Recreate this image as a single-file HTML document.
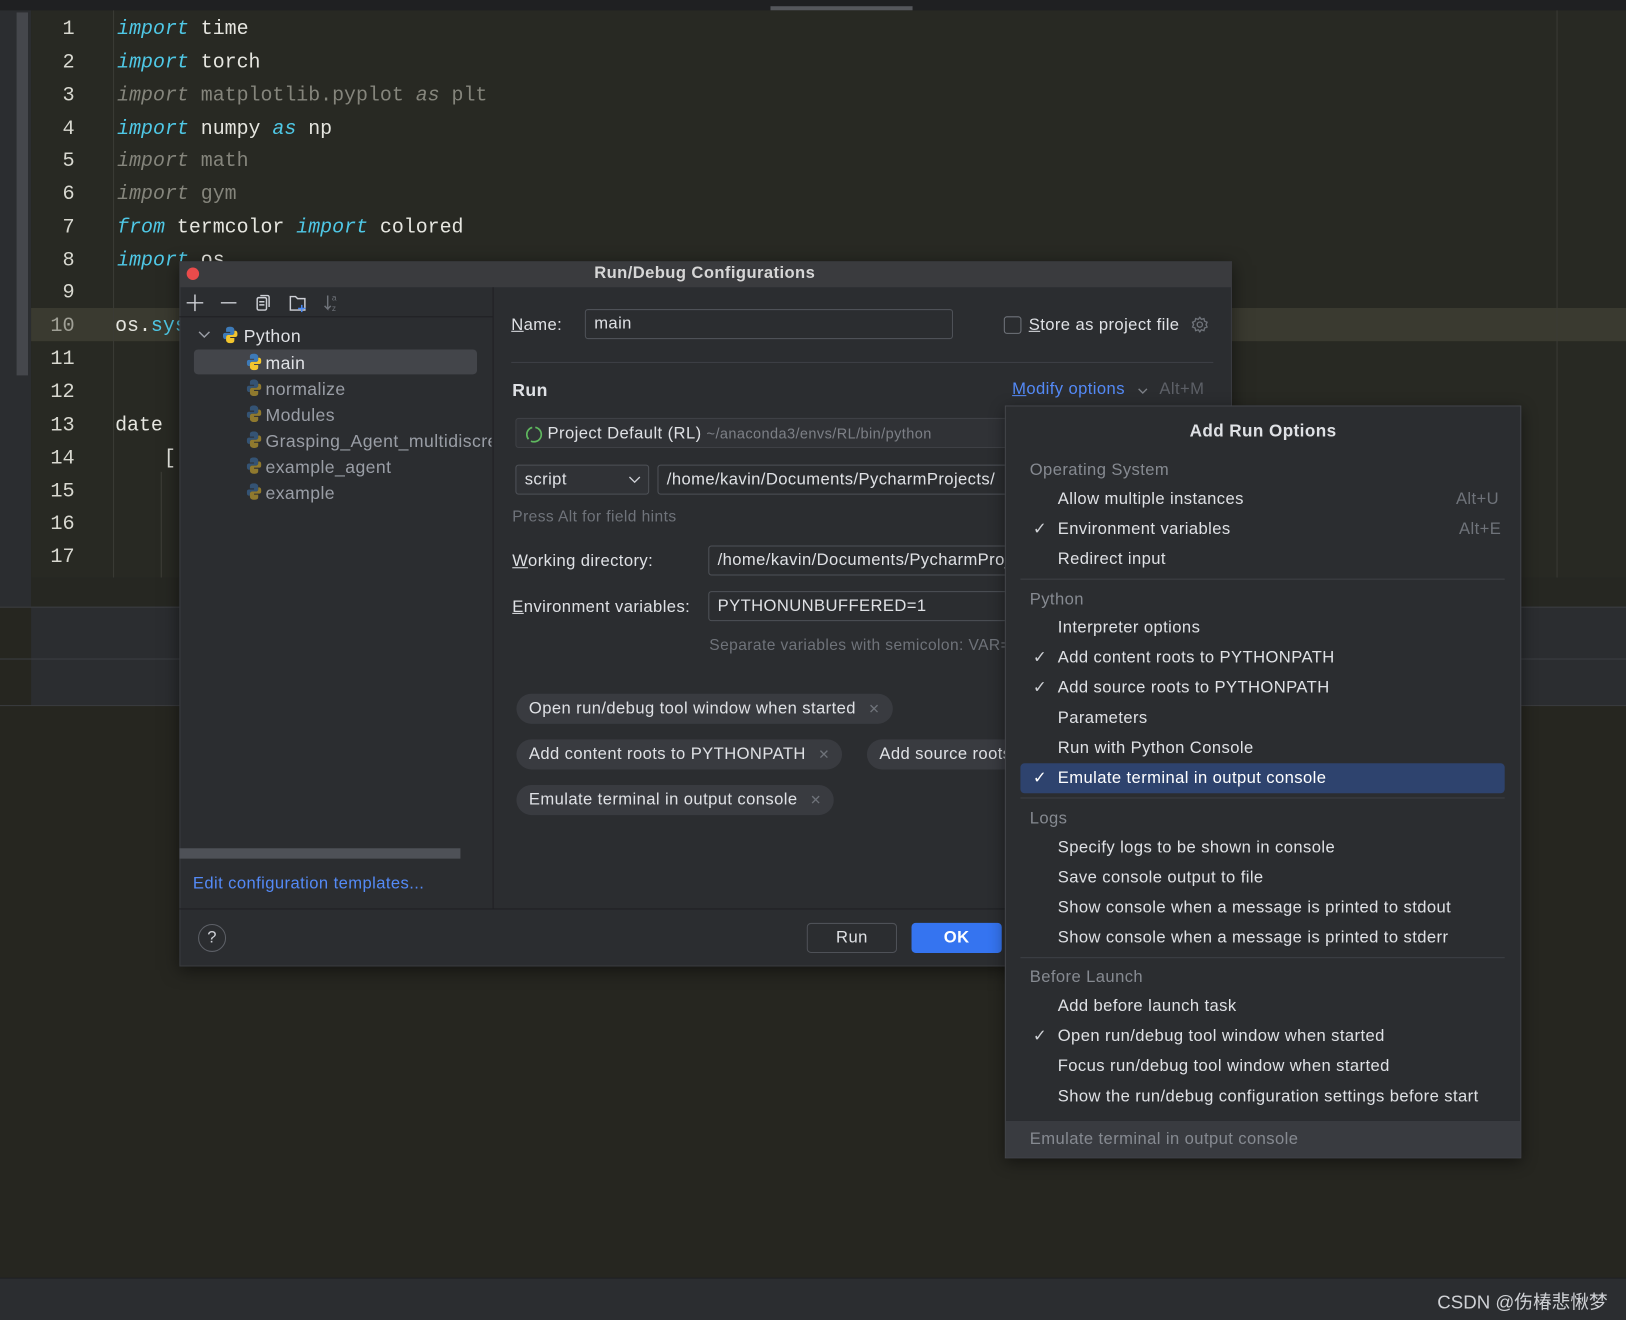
<!DOCTYPE html>
<html><head><meta charset="utf-8"><style>
*{margin:0;padding:0;box-sizing:border-box}
html,body{width:1626px;height:1320px;overflow:hidden;background:#262620}
#w{position:absolute;left:0;top:0;width:1568px;height:1273px;transform:scale(1.0370);transform-origin:0 0;font-family:"Liberation Sans",sans-serif;color:#dfe1e5;font-size:16px;letter-spacing:0.4px}
.a{position:absolute;white-space:nowrap}
.code{font-family:"Liberation Mono",monospace;font-size:19.2px;color:#e6e6e0;letter-spacing:0}
.kw{color:#4fc8e6;font-style:italic}
.dim{color:#85857c}
.ln{font-family:"Liberation Mono",monospace;font-size:19.5px;color:#d8d8d0;width:40px;text-align:right;letter-spacing:0}
.t{line-height:20px}
.it{position:absolute;left:1020px}
.hd{position:absolute;left:993px;color:#868a91}
.ck{position:absolute;left:996px;color:#cfd1d5}
.sep{position:absolute;left:984px;width:467px;height:1px;background:#3e4045}
.chip{position:absolute;height:29px;border-radius:15px;background:#393b40;padding:0 12px;line-height:29px;white-space:nowrap;color:#dfe1e5}
.chip span{color:#6f737a;margin-left:12px;font-size:13px}
.fld{position:absolute;height:29px;border:1px solid #4e5157;border-radius:3px;background:#2b2d30;line-height:27px;padding-left:8px;white-space:nowrap;overflow:hidden}
.tr{position:absolute;left:256px;color:#9a9ea6}
.py{position:absolute;width:14px;height:16px}
</style></head><body><div id="w">
<div class="a" style="left:0;top:0;width:1568px;height:10px;background:#1f2022"></div>
<div class="a" style="left:743px;top:6px;width:137px;height:4px;background:#55575c"></div>
<div class="a" style="left:0;top:10px;width:30px;height:575px;background:#2b2d30"></div>
<div class="a" style="left:16px;top:12px;width:11px;height:350px;background:#45474c"></div>
<div class="a" style="left:30px;top:10px;width:1538px;height:547px;background:#282923"></div>
<div class="a" style="left:30px;top:297px;width:1538px;height:32px;background:#3a3a30"></div>
<div class="a" style="left:109px;top:10px;width:1px;height:547px;background:#3a3b35"></div>
<div class="a" style="left:155px;top:455px;width:1px;height:102px;background:#3e3f38"></div>
<div class="a" style="left:1501px;top:10px;width:1px;height:547px;background:#3a3b35"></div>
<div class="a" style="left:30px;top:557px;width:1538px;height:123px;background:#2b2d30"></div>
<div class="a" style="left:30px;top:557px;width:1538px;height:28px;background:#262722"></div>
<div class="a" style="left:0;top:585px;width:1568px;height:1px;background:#3c3e42"></div>
<div class="a" style="left:0;top:635px;width:1568px;height:1px;background:#3c3e42"></div>
<div class="a" style="left:0;top:680px;width:1568px;height:1px;background:#3c3e42"></div>
<div class="a" style="left:0;top:681px;width:1568px;height:551px;background:#262620"></div>
<div class="a" style="left:0;top:1232px;width:1568px;height:41px;background:#2b2d30;border-top:1px solid #1e1f22"></div>
<div class="a" style="left:1386px;top:1242px;font-size:18px;color:#cfd1d5;letter-spacing:0;font-family:'Liberation Sans','Noto Sans CJK SC',sans-serif">CSDN @伤椿悲愀梦</div>

<div class="a ln" style="left:32px;top:17px">1</div>
<div class="a ln" style="left:32px;top:49px">2</div>
<div class="a ln" style="left:32px;top:81px">3</div>
<div class="a ln" style="left:32px;top:113px">4</div>
<div class="a ln" style="left:32px;top:144px">5</div>
<div class="a ln" style="left:32px;top:176px">6</div>
<div class="a ln" style="left:32px;top:208px">7</div>
<div class="a ln" style="left:32px;top:240px">8</div>
<div class="a ln" style="left:32px;top:271px">9</div>
<div class="a ln" style="left:32px;top:303px;color:#a0a096">10</div>
<div class="a ln" style="left:32px;top:335px">11</div>
<div class="a ln" style="left:32px;top:367px">12</div>
<div class="a ln" style="left:32px;top:399px">13</div>
<div class="a ln" style="left:32px;top:431px">14</div>
<div class="a ln" style="left:32px;top:463px">15</div>
<div class="a ln" style="left:32px;top:494px">16</div>
<div class="a ln" style="left:32px;top:526px">17</div>
<div class="a code" style="left:113px;top:17px"><span class="kw">import</span> time</div>
<div class="a code" style="left:113px;top:49px"><span class="kw">import</span> torch</div>
<div class="a code dim" style="left:113px;top:81px"><i>import</i> matplotlib.pyplot <i>as</i> plt</div>
<div class="a code" style="left:113px;top:113px"><span class="kw">import</span> numpy <span class="kw">as</span> np</div>
<div class="a code dim" style="left:113px;top:144px"><i>import</i> math</div>
<div class="a code dim" style="left:113px;top:176px"><i>import</i> gym</div>
<div class="a code" style="left:113px;top:208px"><span class="kw">from</span> termcolor <span class="kw">import</span> colored</div>
<div class="a code" style="left:113px;top:240px"><span class="kw">import</span> os</div>
<div class="a code" style="left:111px;top:303px">os.<span style="color:#4fc8e6">sys</span></div>
<div class="a code" style="left:111px;top:399px">date</div>
<div class="a code" style="left:158px;top:431px">[</div>

<div class="a" style="left:173px;top:252px;width:1015px;height:680px;background:#2b2d30;box-shadow:0 4px 16px rgba(0,0,0,.5);border:1px solid #3a3c40"></div>
<div class="a" style="left:173px;top:252px;width:1015px;height:25px;background:#3a3b3e"></div>
<div class="a" style="left:180px;top:258px;width:12px;height:12px;border-radius:6px;background:#e94b4b"></div>
<div class="a" style="left:573px;top:255px;font-weight:bold;font-size:16px;color:#d6d6d6">Run/Debug Configurations</div>
<div class="a" style="left:475px;top:277px;width:1px;height:599px;background:#1f2023"></div>
<div class="a" style="left:173px;top:305px;width:302px;height:1px;background:#1f2023"></div>
<svg class="a" style="left:178px;top:281px" width="160" height="22" fill="none" stroke="#ced0d6" stroke-width="1.4">
<path d="M10 3v16M2 11h16"/><path d="M35 11h15"/>
<rect x="70" y="6" width="9" height="12" rx="1.5"/><path d="M73 4h7a1.5 1.5 0 0 1 1.5 1.5V15M72 10h5M72 13h5"/>
<path d="M102 5h5l2 2h7v11h-14z"/><path d="M113 13v7M109.5 16.5h7" stroke="#4a8af7"/>
<path d="M138 4v13l-3-3M138 17l3-3" stroke="#6f737a"/><text x="142" y="9" font-size="8" fill="#6f737a" stroke="none">a</text><text x="142" y="19" font-size="8" fill="#6f737a" stroke="none">z</text>
</svg>
<svg class="a" style="left:190px;top:317px" width="14" height="12"><path d="M2 3l5 5 5-5" fill="none" stroke="#9a9ea6" stroke-width="1.4"/></svg>
<svg class="py" style="left:215px;top:315px" viewBox="0 0 14 16"><path d="M7 0C3 0 3 2 3 3v2h4v1H2C0 6 0 8 0 9c0 2 1 3 2 3h1v-2c0-1 1-2 2-2h4c1 0 2-1 2-2V3c0-1-1-3-4-3z" fill="#3d7ab8"/><path d="M7 16c4 0 4-2 4-3v-2H7v-1h5c2 0 2-2 2-3 0-2-1-3-2-3h-1v2c0 1-1 2-2 2H5c-1 0-2 1-2 2v3c0 1 1 3 4 3z" fill="#f2c52e"/></svg>
<div class="a" style="left:235px;top:315px;font-size:17px;color:#dfe1e5">Python</div>
<div class="a" style="left:187px;top:337px;width:273px;height:24px;border-radius:4px;background:#43454a"></div>
<svg class="py" style="left:238px;top:341px" viewBox="0 0 14 16"><path d="M7 0C3 0 3 2 3 3v2h4v1H2C0 6 0 8 0 9c0 2 1 3 2 3h1v-2c0-1 1-2 2-2h4c1 0 2-1 2-2V3c0-1-1-3-4-3z" fill="#3d7ab8"/><path d="M7 16c4 0 4-2 4-3v-2H7v-1h5c2 0 2-2 2-3 0-2-1-3-2-3h-1v2c0 1-1 2-2 2H5c-1 0-2 1-2 2v3c0 1 1 3 4 3z" fill="#f2c52e"/></svg>
<div class="tr" style="top:341px;color:#dfe1e5;font-size:17px">main</div>
<svg class="py" style="left:238px;top:366px;opacity:.5" viewBox="0 0 14 16"><path d="M7 0C3 0 3 2 3 3v2h4v1H2C0 6 0 8 0 9c0 2 1 3 2 3h1v-2c0-1 1-2 2-2h4c1 0 2-1 2-2V3c0-1-1-3-4-3z" fill="#3d7ab8"/><path d="M7 16c4 0 4-2 4-3v-2H7v-1h5c2 0 2-2 2-3 0-2-1-3-2-3h-1v2c0 1-1 2-2 2H5c-1 0-2 1-2 2v3c0 1 1 3 4 3z" fill="#f2c52e"/></svg>
<div class="tr" style="top:366px;font-size:17px">normalize</div>
<svg class="py" style="left:238px;top:391px;opacity:.5" viewBox="0 0 14 16"><path d="M7 0C3 0 3 2 3 3v2h4v1H2C0 6 0 8 0 9c0 2 1 3 2 3h1v-2c0-1 1-2 2-2h4c1 0 2-1 2-2V3c0-1-1-3-4-3z" fill="#3d7ab8"/><path d="M7 16c4 0 4-2 4-3v-2H7v-1h5c2 0 2-2 2-3 0-2-1-3-2-3h-1v2c0 1-1 2-2 2H5c-1 0-2 1-2 2v3c0 1 1 3 4 3z" fill="#f2c52e"/></svg>
<div class="tr" style="top:391px;font-size:17px">Modules</div>
<svg class="py" style="left:238px;top:416px;opacity:.5" viewBox="0 0 14 16"><path d="M7 0C3 0 3 2 3 3v2h4v1H2C0 6 0 8 0 9c0 2 1 3 2 3h1v-2c0-1 1-2 2-2h4c1 0 2-1 2-2V3c0-1-1-3-4-3z" fill="#3d7ab8"/><path d="M7 16c4 0 4-2 4-3v-2H7v-1h5c2 0 2-2 2-3 0-2-1-3-2-3h-1v2c0 1-1 2-2 2H5c-1 0-2 1-2 2v3c0 1 1 3 4 3z" fill="#f2c52e"/></svg>
<div class="tr" style="top:416px;font-size:17px;width:218px;overflow:hidden">Grasping_Agent_multidiscrete</div>
<svg class="py" style="left:238px;top:441px;opacity:.5" viewBox="0 0 14 16"><path d="M7 0C3 0 3 2 3 3v2h4v1H2C0 6 0 8 0 9c0 2 1 3 2 3h1v-2c0-1 1-2 2-2h4c1 0 2-1 2-2V3c0-1-1-3-4-3z" fill="#3d7ab8"/><path d="M7 16c4 0 4-2 4-3v-2H7v-1h5c2 0 2-2 2-3 0-2-1-3-2-3h-1v2c0 1-1 2-2 2H5c-1 0-2 1-2 2v3c0 1 1 3 4 3z" fill="#f2c52e"/></svg>
<div class="tr" style="top:441px;font-size:17px">example_agent</div>
<svg class="py" style="left:238px;top:466px;opacity:.5" viewBox="0 0 14 16"><path d="M7 0C3 0 3 2 3 3v2h4v1H2C0 6 0 8 0 9c0 2 1 3 2 3h1v-2c0-1 1-2 2-2h4c1 0 2-1 2-2V3c0-1-1-3-4-3z" fill="#3d7ab8"/><path d="M7 16c4 0 4-2 4-3v-2H7v-1h5c2 0 2-2 2-3 0-2-1-3-2-3h-1v2c0 1-1 2-2 2H5c-1 0-2 1-2 2v3c0 1 1 3 4 3z" fill="#f2c52e"/></svg>
<div class="tr" style="top:466px;font-size:17px">example</div>
<div class="a" style="left:173px;top:818px;width:271px;height:10px;background:#4e5157"></div>
<div class="a" style="left:186px;top:844px;color:#548af7;font-size:16px">Edit configuration templates...</div>
<div class="a" style="left:493px;top:305px"><u>N</u>ame:</div>
<div class="fld" style="left:564px;top:298px;width:355px">main</div>
<div class="a" style="left:968px;top:305px;width:17px;height:17px;border:1px solid #6f737a;border-radius:3px"></div>
<div class="a" style="left:992px;top:305px"><u>S</u>tore as project file</div>
<svg class="a" style="left:1148px;top:304px" width="18" height="18" fill="none" stroke="#6f737a" stroke-width="1.3"><circle cx="9" cy="9" r="2.5"/><path d="M9 2l1.5 2 2.5-.8.6 2.5 2.4 1-1 2.3 1 2.3-2.4 1-.6 2.5-2.5-.8L9 16l-1.5-2-2.5.8-.6-2.5-2.4-1 1-2.3-1-2.3 2.4-1L5 3.2l2.5.8z"/></svg>
<div class="a" style="left:493px;top:349px;width:677px;height:1px;background:#3e4045"></div>
<div class="a" style="left:494px;top:367px;font-weight:bold;font-size:17px">Run</div>
<div class="a" style="left:976px;top:367px;color:#548af7"><u>M</u>odify options</div>
<svg class="a" style="left:1096px;top:372px" width="12" height="10"><path d="M2 3l4 4 4-4" fill="none" stroke="#7d8087" stroke-width="1.3"/></svg>
<div class="a" style="left:1118px;top:367px;color:#5d6067">Alt+M</div>
<div class="fld" style="left:497px;top:403px;width:480px;background:#303236;border-color:#3e4045;padding-left:30px;line-height:28px">Project Default (RL) <span style="color:#7d8087;font-size:14px">~/anaconda3/envs/RL/bin/python</span></div>
<svg class="a" style="left:506px;top:410px" width="18" height="18"><circle cx="9" cy="9" r="7" fill="none" stroke="#5fb85f" stroke-width="1.6" stroke-dasharray="14 3"/></svg>
<div class="fld" style="left:497px;top:448px;width:129px;background:#303236">script</div>
<svg class="a" style="left:606px;top:458px" width="12" height="10"><path d="M1 2l5 5 5-5" fill="none" stroke="#ced0d6" stroke-width="1.3"/></svg>
<div class="fld" style="left:634px;top:448px;width:345px">/home/kavin/Documents/PycharmProjects/</div>
<div class="a" style="left:494px;top:490px;color:#6f737a;font-size:15px">Press Alt for field hints</div>
<div class="a" style="left:494px;top:533px"><u>W</u>orking directory:</div>
<div class="fld" style="left:683px;top:526px;width:296px">/home/kavin/Documents/PycharmProjects</div>
<div class="a" style="left:494px;top:577px"><u>E</u>nvironment variables:</div>
<div class="fld" style="left:683px;top:570px;width:296px">PYTHONUNBUFFERED=1</div>
<div class="a" style="left:684px;top:614px;color:#6f737a;font-size:15px">Separate variables with semicolon: VAR=value</div>
<div class="chip" style="left:498px;top:669px">Open run/debug tool window when started<span>✕</span></div>
<div class="chip" style="left:498px;top:713px">Add content roots to PYTHONPATH<span>✕</span></div>
<div class="chip" style="left:836px;top:713px">Add source roots to PYTHONPATH<span>✕</span></div>
<div class="chip" style="left:498px;top:757px">Emulate terminal in output console<span>✕</span></div>
<div class="a" style="left:173px;top:876px;width:1015px;height:1px;background:#1f2023"></div>
<div class="a" style="left:191px;top:891px;width:27px;height:27px;border:1px solid #5d6067;border-radius:50%;text-align:center;line-height:25px;color:#ced0d6">?</div>
<div class="a" style="left:778px;top:890px;width:87px;height:29px;border:1px solid #4e5157;border-radius:4px;text-align:center;line-height:27px">Run</div>
<div class="a" style="left:879px;top:890px;width:87px;height:29px;background:#3574f0;border-radius:4px;text-align:center;line-height:29px;color:#fff;font-weight:bold">OK</div>

<div class="a" style="left:969px;top:391px;width:498px;height:726px;background:#2b2d30;border:1px solid #43454a;box-shadow:0 4px 14px rgba(0,0,0,.45)"></div>
<div class="a" style="left:969px;top:407px;width:498px;text-align:center;font-weight:bold;font-size:16.5px">Add Run Options</div>
<div class="a" style="left:984px;top:736px;width:467px;height:29px;background:#2e436e;border-radius:4px"></div>
<div class="a t" style="left:0;top:1px;width:1568px;font-size:16px">
<div class="hd" style="top:443px">Operating System</div>
<div class="it" style="top:471px">Allow multiple instances</div><div class="a" style="left:1404px;top:471px;color:#6f737a">Alt+U</div>
<div class="ck" style="top:500px">✓</div><div class="it" style="top:500px">Environment variables</div><div class="a" style="left:1407px;top:500px;color:#6f737a">Alt+E</div>
<div class="it" style="top:529px">Redirect input</div>
<div class="sep" style="top:557px"></div>
<div class="hd" style="top:568px">Python</div>
<div class="it" style="top:595px">Interpreter options</div>
<div class="ck" style="top:624px">✓</div><div class="it" style="top:624px">Add content roots to PYTHONPATH</div>
<div class="ck" style="top:653px">✓</div><div class="it" style="top:653px">Add source roots to PYTHONPATH</div>
<div class="it" style="top:682px">Parameters</div>
<div class="it" style="top:711px">Run with Python Console</div>
<div class="ck" style="top:740px;color:#fff">✓</div><div class="it" style="top:740px;color:#fff">Emulate terminal in output console</div>
<div class="sep" style="top:768px"></div>
<div class="hd" style="top:779px">Logs</div>
<div class="it" style="top:807px">Specify logs to be shown in console</div>
<div class="it" style="top:836px">Save console output to file</div>
<div class="it" style="top:865px">Show console when a message is printed to stdout</div>
<div class="it" style="top:894px">Show console when a message is printed to stderr</div>
<div class="sep" style="top:922px"></div>
<div class="hd" style="top:932px">Before Launch</div>
<div class="it" style="top:960px">Add before launch task</div>
<div class="ck" style="top:989px">✓</div><div class="it" style="top:989px">Open run/debug tool window when started</div>
<div class="it" style="top:1018px">Focus run/debug tool window when started</div>
<div class="it" style="top:1047px">Show the run/debug configuration settings before start</div>
</div>
<div class="a" style="left:970px;top:1081px;width:496px;height:35px;background:#393b40"></div>
<div class="a" style="left:993px;top:1090px;color:#868a91">Emulate terminal in output console</div>
</div></body></html>
